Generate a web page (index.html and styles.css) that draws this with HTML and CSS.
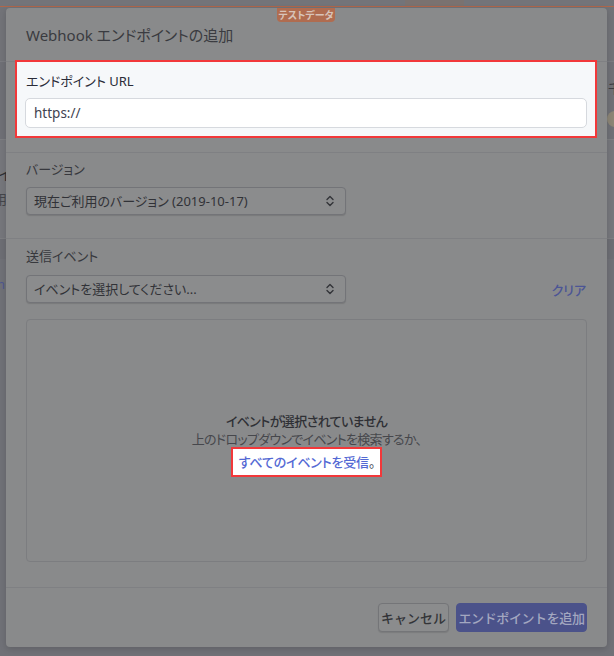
FILE: index.html
```html
<!DOCTYPE html>
<html lang="ja">
<head>
<meta charset="utf-8">
<title>Webhook エンドポイントの追加</title>
<link rel="stylesheet" href="styles.css">
</head>
<body>
<div class="page">
  <div class="topbar"><span class="tab-peek"></span></div>
  <div class="page-head">
    <span class="peek-char">千</span>
  </div>
  <div class="page-row">
    <span class="avatar"></span>
  </div>
  <div class="page-card">
    <div class="card-title">イ</div>
    <div class="card-sub">用</div>
  </div>
  <div class="page-gap"></div>
  <div class="page-list">
    <div class="list-link">n</div>
  </div>
</div>

<div class="badge">テストデータ</div>

<div class="modal">
  <div class="modal-header">
    <h1 class="modal-title">Webhook エンドポイントの追加</h1>
  </div>

  <div class="section section-url">
    <div class="spot">
      <label class="spot-label">エンドポイント URL</label>
      <div class="text-input">https://</div>
    </div>
  </div>

  <div class="section section-version">
    <div class="field-label">バージョン</div>
    <div class="select">
      <span class="select-text">現在ご利用のバージョン (2019-10-17)</span>
      <svg class="chev" width="8" height="12" viewBox="0 0 8 12"><path d="M1 4.5 L4 1.5 L7 4.5 M1 7.5 L4 10.5 L7 7.5" fill="none" stroke="#333438" stroke-width="1.4" stroke-linecap="round" stroke-linejoin="round"/></svg>
    </div>
  </div>

  <div class="section section-events">
    <div class="field-label">送信イベント</div>
    <div class="select-row">
      <div class="select">
        <span class="select-text">イベントを選択してください...</span>
        <svg class="chev" width="8" height="12" viewBox="0 0 8 12"><path d="M1 4.5 L4 1.5 L7 4.5 M1 7.5 L4 10.5 L7 7.5" fill="none" stroke="#333438" stroke-width="1.4" stroke-linecap="round" stroke-linejoin="round"/></svg>
      </div>
      <span class="clear-link">クリア</span>
    </div>
    <div class="empty-box">
      <div class="empty-title">イベントが選択されていません</div>
      <div class="empty-sub">上のドロップダウンでイベントを検索するか、</div>
      <div class="empty-link-wrap"><span class="empty-link"><span class="blue">すべてのイベントを受信</span>。</span></div>
    </div>
  </div>

  <div class="modal-footer">
    <button class="btn btn-cancel">キャンセル</button>
    <button class="btn btn-primary">エンドポイントを追加</button>
  </div>
</div>
</body>
</html>
```

FILE: styles.css
```css
* { box-sizing: border-box; }

html, body {
  margin: 0;
  padding: 0;
}

body {
  width: 614px;
  height: 656px;
  overflow: hidden;
  position: relative;
  background: #6f7076;
  font-family: "Noto Sans", "Noto Sans CJK JP", sans-serif;
  font-feature-settings: "palt";
  font-size: 13px;
}

/* ---------- dimmed page behind the modal ---------- */
.page {
  display: flex;
  flex-direction: column;
  height: 656px;
}

.topbar {
  height: 7px;
  background: #737479;
  border-bottom: 1px solid #b0674b;
  display: flex;
}

.tab-peek {
  margin-left: 405px;
  width: 59px;
  height: 6px;
  background: #7a7270;
}

.page-head {
  height: 55px;
  background: #727378;
  border-bottom: 1px solid #7a7b80;
  display: flex;
  justify-content: flex-end;
  align-items: flex-end;
}

.peek-char {
  color: #3c3d42;
  font-size: 13px;
  line-height: 18px;
  margin-right: -7px;
  margin-bottom: -36px;
}

.page-row {
  height: 77px;
  display: flex;
  justify-content: flex-end;
  align-items: center;
}

.avatar {
  width: 16px;
  height: 16px;
  border-radius: 50%;
  background: #8c8576;
  margin-right: -9px;
  margin-top: 36px;
}

.page-card {
  height: 100px;
  background: #76777c;
  border-top: 1px solid #7d7e82;
  border-bottom: 1px solid #7d7e82;
  padding-top: 24px;
}

.card-title {
  color: #2e2f34;
  font-size: 15px;
  line-height: 20px;
  margin-left: -2px;
}

.card-sub {
  color: #45464b;
  font-size: 13px;
  line-height: 18px;
  margin-left: -6px;
  margin-top: 6px;
}

.page-gap {
  height: 20px;
  background: #6d6e74;
}

.page-list {
  flex: 1;
  background: #707177;
  padding-top: 16px;
}

.list-link {
  color: #4e5690;
  font-size: 13px;
  margin-left: -3px;
}

/* ---------- badge ---------- */
.badge {
  position: absolute;
  top: 8px;
  left: 277px;
  width: 58px;
  height: 14px;
  background: #b06c50;
  color: #d8c3b9;
  font-size: 10px;
  font-weight: 700;
  line-height: 14px;
  text-align: center;
  white-space: nowrap;
  border-radius: 0 0 4px 4px;
  z-index: 2;
}

/* ---------- modal ---------- */
.modal {
  position: absolute;
  top: 8px;
  left: 6px;
  width: 601px;
  height: 639px;
  background: #898a8b;
  border-radius: 4px;
  box-shadow: 0 2px 6px rgba(0, 0, 0, 0.15);
  display: flex;
  flex-direction: column;
  z-index: 1;
}

.modal-header {
  height: 54px;
  padding: 15px 20px 0;
  border-bottom: 1px solid #7f8083;
}

.modal-title {
  margin: 0;
  font-size: 15px;
  font-weight: 400;
  line-height: 24px;
  color: #3a3b40;
}

.section {
  border-bottom: 1px solid #7f8083;
  padding: 0 20px;
}

.section-url {
  height: 91px;
  padding-bottom: 14px;
}

.spot {
  margin: -2px -10px 0 -11px;
  height: 78px;
  background: #f6f8fa;
  border: 2px solid #f2383a;
  padding: 9px 8px 8px 8px;
  display: flex;
  flex-direction: column;
  gap: 7px;
  position: relative;
  z-index: 1;
}

.spot-label {
  font-size: 13px;
  font-weight: 400;
  line-height: 20px;
  color: #2a2c38;
  margin-left: 1px;
}

.text-input {
  height: 30px;
  background: #ffffff;
  border: 1px solid #d6d9de;
  border-radius: 5px;
  padding: 0 8px;
  line-height: 28px;
  color: #41434f;
  font-size: 13.5px;
}

.section-version {
  height: 86px;
  padding-top: 6px;
}

.field-label {
  font-size: 13px;
  line-height: 20px;
  color: #37383d;
}

.select {
  width: 320px;
  height: 28px;
  margin-top: 8px;
  border: 1px solid #737478;
  border-radius: 4px;
  background: #8b8c8d;
  box-shadow: 0 1px 1px rgba(0, 0, 0, 0.12);
  display: flex;
  align-items: center;
  justify-content: space-between;
  padding: 0 11px 0 7px;
}

.select-text {
  font-size: 13px;
  color: #313237;
  line-height: 20px;
}

.chev {
  display: block;
}

.section-events {
  height: 349px;
  padding-top: 7px;
  display: flex;
  flex-direction: column;
}

.select-row {
  margin-top: 9px;
  display: flex;
  align-items: center;
  justify-content: space-between;
}

.select-row .select {
  margin-top: 0;
}

.clear-link {
  color: #4c5595;
  font-size: 13px;
  font-weight: 500;
  margin-right: 1px;
}

.empty-box {
  margin-top: 16px;
  height: 243px;
  border: 1px solid #7c7d80;
  border-radius: 4px;
  display: flex;
  flex-direction: column;
  align-items: center;
  justify-content: center;
  padding-top: 8px;
}

.empty-title {
  font-size: 13px;
  font-weight: 500;
  line-height: 18px;
  letter-spacing: -0.6px;
  color: #2f3035;
}

.empty-sub {
  font-size: 13px;
  line-height: 18px;
  letter-spacing: -0.7px;
  color: #46474c;
}

.empty-link-wrap {
  margin-top: -1px;
}

.empty-link {
  display: inline-block;
  background: #ffffff;
  border: 2px solid #f2383a;
  padding: 4px 5px 4px 6px;
  font-size: 13px;
  line-height: 18px;
  letter-spacing: -0.2px;
  color: #454650;
}

.blue {
  color: #5469d4;
  font-weight: 500;
}

.modal-footer {
  flex: 1;
  padding: 15px 20px;
  display: flex;
  justify-content: flex-end;
  align-items: flex-start;
  gap: 7px;
}

.btn {
  height: 29px;
  border-radius: 4px;
  font-family: inherit;
  font-size: 13px;
  font-weight: 500;
  line-height: 20px;
  padding: 0;
  text-align: center;
  white-space: nowrap;
  cursor: pointer;
}

.btn-cancel {
  width: 71px;
  background: #8b8c8d;
  border: 1px solid #747578;
  color: #333438;
  box-shadow: 0 1px 1px rgba(0, 0, 0, 0.1);
}

.btn-primary {
  width: 131px;
  background: #4b528a;
  border: 1px solid #4b528a;
  color: #a3a7c0;
  letter-spacing: -0.4px;
}
```
